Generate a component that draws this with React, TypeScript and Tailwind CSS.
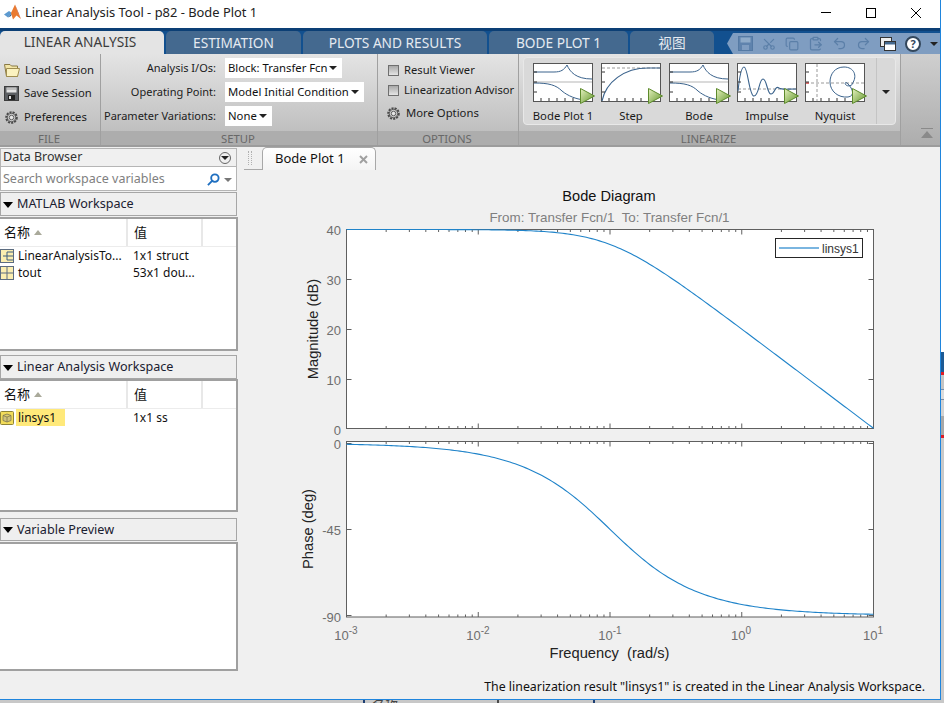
import { Copy, ClipboardPaste, Redo2, Scissors, Undo2 } from "lucide-react";

const uiFont = "font-['Noto_Sans','Noto_Sans_CJK_SC',sans-serif]";

const X0 = 346.5;
const DECADE = 131.75;
const fx = (w: number) => X0 + (Math.log10(w) + 3) * DECADE;

function curve(fn: (w: number) => number) {
  const pts: string[] = [];
  for (let i = 0; i <= 200; i++) {
    const w = Math.pow(10, -3 + (4 * i) / 200);
    pts.push(`${fx(w).toFixed(2)},${fn(w).toFixed(2)}`);
  }
  return "M" + pts.join("L");
}

// 100 / (10s + 1)
const magY = (w: number) => 428.3 - (20 * Math.log10(100 / Math.sqrt(1 + 100 * w * w))) * 4.97;
const phaseY = (w: number) => 443.2 + (Math.atan(10 * w) * 180) / Math.PI * 1.913;

function LogTicks({ y, dir }: { y: number; dir: 1 | -1 }) {
  const lines = [];
  for (let d = 0; d < 4; d++) {
    for (let m = 2; m < 10; m++) {
      const x = X0 + (d + Math.log10(m)) * DECADE;
      lines.push(<line key={`${d}-${m}`} x1={x} x2={x} y1={y} y2={y + dir * 2.5} />);
    }
    if (d > 0) {
      const x = X0 + d * DECADE;
      lines.push(<line key={`M${d}`} x1={x} x2={x} y1={y} y2={y + dir * 5} />);
    }
  }
  return <g stroke="#5f5f5f" strokeWidth="1">{lines}</g>;
}

function XLabel({ x, exp }: { x: number; exp: string }) {
  return (
    <text x={x} y={640} fontSize="13" fill="#6e6e6e" textAnchor="middle">
      10
      <tspan dy="-6" fontSize="10">{exp}</tspan>
    </text>
  );
}

function BodeChart() {
  const labels = "#6e6e6e";
  return (
    <svg
      viewBox="244 170 696 508"
      className="block w-[696px] h-[508px] font-['Liberation_Sans',sans-serif]"
    >
      <text x={609} y={201} fontSize="14.6" textAnchor="middle" fill="#111">Bode Diagram</text>
      <text x={609.5} y={222} fontSize="13.4" textAnchor="middle" fill="#7f7f7f" style={{ whiteSpace: "pre" }}>
        From: Transfer Fcn/1  To: Transfer Fcn/1
      </text>

      <rect x="346.5" y="229.5" width="527" height="199" fill="#fff" stroke="#5f5f5f" />
      <rect x="346.5" y="441.5" width="527" height="175.5" fill="#fff" stroke="#5f5f5f" />

      <LogTicks y={229.5} dir={1} />
      <LogTicks y={428.5} dir={-1} />
      <LogTicks y={441.5} dir={1} />
      <LogTicks y={617} dir={-1} />

      <g stroke="#5f5f5f">
        {[279.5, 329.5, 379.5].map((y) => (
          <g key={y}>
            <line x1="346.5" x2="351.5" y1={y} y2={y} />
            <line x1="868.5" x2="873.5" y1={y} y2={y} />
          </g>
        ))}
        <line x1="346.5" x2="351.5" y1="529.5" y2="529.5" />
        <line x1="868.5" x2="873.5" y1="529.5" y2="529.5" />
        <line x1="346.5" x2="351.5" y1="615.5" y2="615.5" />
        <line x1="868.5" x2="873.5" y1="615.5" y2="615.5" />
        <line x1="346.5" x2="351.5" y1="443.5" y2="443.5" />
        <line x1="868.5" x2="873.5" y1="443.5" y2="443.5" />
      </g>

      <path d={curve(magY)} fill="none" stroke="#1f83c9" strokeWidth="1.1" />
      <path d={curve(phaseY)} fill="none" stroke="#1f83c9" strokeWidth="1.1" />

      <g fontSize="13" fill={labels} textAnchor="end">
        <text x="341" y="235">40</text>
        <text x="341" y="285">30</text>
        <text x="341" y="335">20</text>
        <text x="341" y="385">10</text>
        <text x="341" y="435">0</text>
        <text x="341" y="449">0</text>
        <text x="341" y="535">-45</text>
        <text x="341" y="622">-90</text>
      </g>

      <XLabel x={346} exp="-3" />
      <XLabel x={478} exp="-2" />
      <XLabel x={610} exp="-1" />
      <XLabel x={741} exp="0" />
      <XLabel x={873} exp="1" />

      <text transform="translate(318 329) rotate(-90)" fontSize="14.7" fill="#222" textAnchor="middle">Magnitude (dB)</text>
      <text transform="translate(313 529) rotate(-90)" fontSize="14.7" fill="#222" textAnchor="middle">Phase (deg)</text>
      <text x={609.5} y={658} fontSize="14.7" fill="#222" textAnchor="middle" style={{ whiteSpace: "pre" }}>Frequency  (rad/s)</text>

      <rect x="775.5" y="238.5" width="87" height="19" fill="#fff" stroke="#262626" />
      <line x1="779" x2="819" y1="248" y2="248" stroke="#7ab5e0" strokeWidth="2" />
      <text x="822" y="253" fontSize="12" fill="#333">linsys1</text>
    </svg>
  );
}

function MatlabLogo() {
  return (
    <svg viewBox="0 0 17 17" className="w-[17px] h-[17px] shrink-0">
      <polygon points="0,10.5 5,7 8,9 4,13.5" fill="#5c9ad0" />
      <polygon points="4,13.5 8,9 9.5,6 7,12" fill="#2b5f96" />
      <polygon points="7,9 11,0.5 14,9 17,15 12.5,11.5 9,15.5" fill="#ea7a30" />
      <polygon points="11,0.5 14,9 17,15 13,5" fill="#b8401a" />
    </svg>
  );
}

function WindowButtons() {
  return (
    <div className="ml-auto mr-[2px] flex items-center h-full">
      <div className="w-[45px] flex justify-center"><div className="w-[10px] h-px bg-black" /></div>
      <div className="w-[45px] flex justify-center"><div className="w-[10px] h-[10px] border border-black" /></div>
      <div className="w-[45px] flex justify-center">
        <svg viewBox="0 0 10 10" className="w-[10px] h-[10px]" stroke="#000" strokeWidth="1">
          <line x1="0" y1="0" x2="10" y2="10" />
          <line x1="10" y1="0" x2="0" y2="10" />
        </svg>
      </div>
    </div>
  );
}

function RibbonTab({ label, className }: { label: string; className: string }) {
  return (
    <div className={`h-[23px] rounded-t-[5px] bg-[#44698f] text-[#e6ebf1] text-[13.7px] leading-[23px] flex items-center justify-center ${className}`}>
      {label}
    </div>
  );
}

function QuickAccess() {
  const dim = "text-[#5b7fa8]";
  return (
    <div className="ml-[13px] w-[213px] h-[21px] mt-[-1px] bg-[#7f9dc1] flex items-center pl-[11px] gap-[9px] [clip-path:polygon(6px_0,100%_0,100%_100%,6px_100%,0_50%)]">
      <svg viewBox="0 0 15 15" className="w-[15px] h-[15px] shrink-0">
        <rect x="0.5" y="0.5" width="14" height="14" fill="#5f83ad" stroke="#557aa4" />
        <rect x="2.5" y="1.5" width="10" height="5" fill="#8fabc9" />
        <rect x="4" y="9" width="7" height="5" fill="#7f9dc1" />
      </svg>
      <Scissors size={14} className={`${dim} -rotate-90`} />
      <Copy size={14} className={dim} />
      <ClipboardPaste size={15} className={dim} />
      <Undo2 size={15} className={dim} />
      <Redo2 size={15} className={dim} />
      <svg viewBox="0 0 16 14" className="w-4 h-[14px]">
        <rect x="0.5" y="0.5" width="11" height="9" fill="#eee" stroke="#333" />
        <rect x="4.5" y="4.5" width="11" height="9" fill="#fff" stroke="#333" />
        <rect x="5" y="5" width="10" height="2.5" fill="#44698f" />
      </svg>
      <div className="w-[16px] h-[16px] rounded-full bg-white border-2 border-[#33475c] text-[#33475c] text-[11px] leading-[12px] font-bold text-center">?</div>
      <Caret className="border-t-[#111]" />
    </div>
  );
}

function Caret({ className = "" }: { className?: string }) {
  return <span className={`inline-block w-0 h-0 border-x-[4px] border-x-transparent border-t-[4px] border-t-[#222] ${className}`} />;
}

function FolderIcon() {
  return (
    <svg viewBox="0 0 16 15" className="w-4 h-[15px] shrink-0">
      <path d="M0.5 1.5H6L7.5 3H13.5V13.5H2.5Z" fill="#f3e6a8" stroke="#8a7a45" />
      <path d="M2.5 5.5H15.5L13.5 13.5H2.5Z" fill="#fbf2c0" stroke="#a08e50" />
    </svg>
  );
}

function FloppyIcon() {
  return (
    <svg viewBox="0 0 15 15" className="w-[15px] h-[15px] shrink-0">
      <rect x="0.5" y="0.5" width="14" height="14" fill="#5c5f63" stroke="#3d3d3d" />
      <rect x="2.5" y="1.5" width="10" height="5" fill="#e4e4e4" />
      <line x1="3" x2="12" y1="3" y2="3" stroke="#999" />
      <rect x="4" y="9" width="7" height="5" fill="#222" />
      <rect x="5" y="10" width="2" height="3" fill="#ddd" />
    </svg>
  );
}

function GearIcon() {
  return (
    <svg viewBox="0 0 16 16" className="w-[15px] h-[15px] shrink-0" fill="none">
      <circle cx="8" cy="8" r="5.5" stroke="#4a4a4a" strokeWidth="2.4" strokeDasharray="2.2 1.1" />
      <circle cx="8" cy="8" r="4.4" fill="#cfcfcf" stroke="#555" />
      <circle cx="8" cy="8" r="2.4" fill="#e6e6e6" stroke="#555" />
    </svg>
  );
}

function SectionLabel({ children }: { children: React.ReactNode }) {
  return (
    <div className="h-[14px] pr-[2px] bg-[#adadad] text-[#686868] text-[11.3px] leading-[15px] text-center">{children}</div>
  );
}

function FileSection() {
  const items = [
    { icon: <FolderIcon />, label: "Load Session" },
    { icon: <FloppyIcon />, label: "Save Session" },
    { icon: <GearIcon />, label: "Preferences" },
  ];
  return (
    <div className="flex flex-col w-[101px] border-r border-[#a0a0a0]">
      <div className="h-[77px] flex flex-col pl-[4px] pt-[6px] gap-[3px]">
        {items.map((it) => (
          <div key={it.label} className="h-[20.5px] flex items-center gap-[5px] text-[11.3px] text-[#1c1c1c]">
            {it.icon}
            <span>{it.label}</span>
          </div>
        ))}
      </div>
      <SectionLabel>FILE</SectionLabel>
    </div>
  );
}

function Combo({ label, value, width }: { label: string; value: string; width: string }) {
  return (
    <div className="flex items-center h-[20px] gap-[9px]">
      <div className="w-[115px] text-right text-[11px] whitespace-nowrap text-[#1c1c1c] flex justify-end">{label}</div>
      <div className={`${width} h-[20px] bg-white flex items-center justify-between pl-[3px] pr-[5px] text-[11.3px] text-[#111]`}>
        <span className="whitespace-nowrap">{value}</span>
        <Caret />
      </div>
    </div>
  );
}

function SetupSection() {
  return (
    <div className="flex flex-col w-[277px] border-r border-[#a0a0a0]">
      <div className="h-[77px] flex flex-col pt-[4px] gap-[4px]">
        <Combo label="Analysis I/Os:" value="Block: Transfer Fcn" width="w-[117px]" />
        <Combo label="Operating Point:" value="Model Initial Condition" width="w-[139px]" />
        <Combo label="Parameter Variations:" value="None" width="w-[47px]" />
      </div>
      <SectionLabel>SETUP</SectionLabel>
    </div>
  );
}

function CheckRow({ label }: { label: string }) {
  return (
    <div className="flex items-center gap-[5px] h-[20px] text-[11.2px] text-[#1c1c1c] whitespace-nowrap">
      <div className="w-[11px] h-[11px] border border-[#6f6f6f] bg-linear-to-b from-[#a9a9a9] to-[#e5e5e5]" />
      {label}
    </div>
  );
}

function OptionsSection() {
  return (
    <div className="flex flex-col w-[141px] border-r border-[#a0a0a0]">
      <div className="h-[77px] flex flex-col pl-[10px] pt-[6px]">
        <CheckRow label="Result Viewer" />
        <CheckRow label="Linearization Advisor" />
        <div className="flex items-center gap-[5px] h-[20px] mt-[3px] ml-[-2px] text-[11.3px] text-[#1c1c1c]">
          <GearIcon />
          More Options
        </div>
      </div>
      <SectionLabel>OPTIONS</SectionLabel>
    </div>
  );
}

function PlayBadge() {
  return (
    <svg viewBox="0 0 15 16" className="absolute left-[46px] top-[24px] w-[15px] h-[16px]">
      <defs>
        <linearGradient id="play" x1="0" x2="1" y1="0" y2="1">
          <stop offset="0" stopColor="#e6f2c0" />
          <stop offset="1" stopColor="#5f9428" />
        </linearGradient>
      </defs>
      <polygon points="0.5,0.5 14.5,8 0.5,15.5" fill="url(#play)" stroke="#5d8a2c" />
    </svg>
  );
}

const plotStroke = "#3b638c";

function AxisTicks() {
  return (
    <g stroke="#333" strokeWidth="1">
      {[7, 15, 23, 31, 39, 47].map((x) => <line key={x} x1={x} x2={x} y1="37" y2="34" />)}
      {[8, 18, 28].map((y) => <line key={y} x1="0" x2="3" y1={y} y2={y} />)}
    </g>
  );
}

function BodeThumb() {
  return (
    <>
      <line x1="0" x2="58" y1="18" y2="18" stroke="#b5b5b5" />
      <path d="M0 8H20C27 8 30 6 33 1C36 8 42 15 58 15" fill="none" stroke={plotStroke} />
      <path d="M0 19C15 19 22 21 28 27C34 32 42 35 50 36" fill="none" stroke={plotStroke} />
    </>
  );
}

function StepThumb() {
  return (
    <>
      <line x1="0" x2="58" y1="4" y2="4" stroke="#999" strokeDasharray="3 2" />
      <path d="M0 37C4 18 22 4 46 4H58" fill="none" stroke={plotStroke} strokeWidth="1.2" />
    </>
  );
}

function ImpulseThumb() {
  return (
    <>
      <line x1="0" x2="58" y1="25" y2="25" stroke="#999" strokeDasharray="3 2" />
      <path d="M0 27C2 8 4 3 6 3C10 3 11 32 16 32C21 32 21 15 25 15C29 15 29 30 33 30C37 30 37 21 41 24C44 26 47 25 58 25" fill="none" stroke={plotStroke} strokeWidth="1.1" />
    </>
  );
}

function NyquistThumb() {
  return (
    <>
      <line x1="11" x2="11" y1="0" y2="37" stroke="#999" strokeDasharray="3 2" />
      <line x1="0" x2="58" y1="19" y2="19" stroke="#999" strokeDasharray="3 2" />
      <line x1="0" x2="3" y1="19" y2="19" stroke="#e11" />
      <path d="M46 20C52 12 48 3 38 3C29 3 24 10 24 18C24 27 32 34 42 33C49 32 47 25 42 20C40 17 38 19 40 21C42 23 47 21 46 20" fill="none" stroke={plotStroke} />
    </>
  );
}

function GalleryItem({ label, children }: { label: string; children: React.ReactNode }) {
  return (
    <div className="w-[68px] flex flex-col items-center shrink-0">
      <div className="relative w-[58px] h-[37px]">
        <svg viewBox="0 0 58 37" className="block w-[58px] h-[37px] bg-white border border-[#555] overflow-visible box-content -m-px">
          {children}
          <AxisTicks />
        </svg>
        <PlayBadge />
      </div>
      <div className="mt-[7px] text-[11.3px] leading-[16px] text-[#1a1a1a] whitespace-nowrap">{label}</div>
    </div>
  );
}

function LinearizeSection() {
  return (
    <div className="flex flex-col w-[382px] border-r border-[#a0a0a0]">
      <div className="h-[77px] pt-[3px] pl-[4px]">
        <div className="w-[373px] h-[68px] rounded-[4px] bg-[#d9d9d9] border border-[#e8e8e8] flex">
          <div className="w-[353px] flex pl-[5px] pt-[6px] border-r border-[#c4c4c4]">
            <GalleryItem label="Bode Plot 1"><BodeThumb /></GalleryItem>
            <GalleryItem label="Step"><StepThumb /></GalleryItem>
            <GalleryItem label="Bode"><BodeThumb /></GalleryItem>
            <GalleryItem label="Impulse"><ImpulseThumb /></GalleryItem>
            <GalleryItem label="Nyquist"><NyquistThumb /></GalleryItem>
          </div>
          <div className="flex-1 flex items-center justify-center pt-[1px]"><Caret /></div>
        </div>
      </div>
      <SectionLabel>LINEARIZE</SectionLabel>
    </div>
  );
}

function Toolbar() {
  return (
    <div className="h-[93px] flex flex-col shrink-0 border-b-2 border-[#9c9c9c]">
      <div className="h-[91px] flex bg-linear-to-b from-[#e4e4e4] to-[#b9b9b9]">
        <FileSection />
        <SetupSection />
        <OptionsSection />
        <LinearizeSection />
        <div className="flex-1 flex flex-col items-center justify-end pl-[12px] pb-[7px] bg-linear-to-b from-[#cfcfcf] to-[#adadad]">
          <div className="w-[12px] h-px bg-[#8a8a8a] mb-[2px]" />
          <div className="w-0 h-0 border-x-[6px] border-x-transparent border-b-[7px] border-b-[#8a8a8a]" />
        </div>
      </div>
    </div>
  );
}

function PaneHeader({ title, className = "" }: { title: string; className?: string }) {
  return (
    <div className={`mr-[1px] pt-[1px] bg-[#efefef] border border-[#a6a6a6] flex items-center gap-[4px] pl-[2px] text-[12.6px] text-[#1a2030] shrink-0 ${className}`}>
      <span className="w-0 h-0 border-x-[5px] border-x-transparent border-t-[6px] border-t-black" />
      {title}
    </div>
  );
}

function TableHead() {
  return (
    <div className="h-[28px] flex border-b border-[#ececec] text-[13px] text-[#111] shrink-0">
      <div className="w-[128px] border-r-2 border-[#e8e8e8] flex items-center gap-[4px] pl-[4px]">
        名称
        <span className="w-0 h-0 border-x-[4px] border-x-transparent border-b-[5px] border-b-[#a9a99a]" />
      </div>
      <div className="w-[75px] border-r-2 border-[#e8e8e8] flex items-center pl-[6px]">值</div>
    </div>
  );
}

function Row({ icon, name, value, highlight }: { icon: React.ReactNode; name: string; value: string; highlight?: boolean }) {
  return (
    <div className="h-[17px] flex items-center text-[12px] text-[#111] shrink-0">
      <div className="w-[133px] flex items-center">
        <div className="w-[15px] shrink-0 overflow-hidden flex justify-end">{icon}</div>
        <span className={`ml-[1px] whitespace-nowrap pl-[2px] ${highlight ? "w-[49px] h-[17px] leading-[17px] bg-[#ffe97a]" : ""}`}>{name}</span>
      </div>
      <span className="whitespace-nowrap">{value}</span>
    </div>
  );
}

function StructIcon() {
  return (
    <svg viewBox="0 0 15 14" className="w-[15px] h-[14px] shrink-0">
      <rect x="0.5" y="0.5" width="13" height="13" fill="#fbeeb0" stroke="#5c6c80" />
      <path d="M13 3H7M13 7H7M13 11H7M7 3V11M3 7H7" stroke="#3e5e80" fill="none" />
    </svg>
  );
}

function GridIcon() {
  return (
    <svg viewBox="0 0 15 14" className="w-[15px] h-[14px] shrink-0">
      <rect x="0.5" y="0.5" width="13" height="13" fill="#fbeeb0" stroke="#5c6c80" />
      <path d="M7 0V14M0 7H14" stroke="#5c6c80" />
    </svg>
  );
}

function CubeIcon() {
  return (
    <svg viewBox="0 0 15 14" className="w-[15px] h-[14px] shrink-0">
      <rect x="0.5" y="0.5" width="13" height="13" rx="1" fill="#f2dc5a" stroke="#8f8436" />
      <path d="M3 4.5L7 3L11 4.5V9.5L7 11L3 9.5ZM3 4.5L7 6L11 4.5M7 6V11" fill="#cfc27a" stroke="#7d7650" strokeWidth="0.8" />
    </svg>
  );
}

function DataBrowser() {
  return (
    <div className="w-[238px] shrink-0 flex flex-col">
      <div className="h-[19px] mt-[1px] mr-[1px] border border-[#b5b5b5] bg-[#f0f0f0] flex items-center justify-between pl-[2px] pr-[5px] text-[12.5px] text-[#333]">
        Data Browser
        <span className="w-[12px] h-[12px] rounded-full border border-[#666] flex items-center justify-center">
          <Caret className="border-x-[3px]" />
        </span>
      </div>
      <div className="h-[24px] mr-[1px] pt-[2px] border-x border-b border-[#b5b5b5] bg-white flex items-center pl-[2px] pr-[4px] text-[12.5px] text-[#808080]">
        <span className="flex-1 whitespace-nowrap">Search workspace variables</span>
        <svg viewBox="0 0 14 14" className="w-[13px] h-[13px]" fill="none" stroke="#1f6fc0" strokeWidth="2">
          <circle cx="8.5" cy="5.5" r="4" />
          <line x1="5.5" y1="8.5" x2="1" y2="13" />
        </svg>
        <Caret className="ml-[4px] border-t-[#777] border-x-[3px]" />
      </div>
      <PaneHeader title="MATLAB Workspace" className="h-[24px] mt-[1px]" />
      <div className="h-[134px] mt-[1px] bg-white border-r-2 border-y-2 border-[#a0a0a0] flex flex-col">
        <TableHead />
        <Row icon={<StructIcon />} name="LinearAnalysisTo..." value="1x1 struct" />
        <Row icon={<GridIcon />} name="tout" value="53x1 dou..." />
      </div>
      <PaneHeader title="Linear Analysis Workspace" className="h-[24px] mt-[4px]" />
      <div className="h-[133px] bg-white border-r-2 border-y-2 border-[#a0a0a0] flex flex-col">
        <TableHead />
        <Row icon={<CubeIcon />} name="linsys1" value="1x1 ss" highlight />
      </div>
      <PaneHeader title="Variable Preview" className="h-[23px] mt-[6px]" />
      <div className="h-[129px] mt-[1px] bg-white border-r-2 border-y-2 border-[#a0a0a0]" />
    </div>
  );
}

function DocTabs() {
  return (
    <div className="h-[23px] flex items-end shrink-0">
      <div className="w-[18px] h-full border-b border-[#a8a8a8] pt-[4px] pl-[4px]">
        <div className="w-[4px] h-[14px] border-x border-dotted border-[#b0b0b0]" />
      </div>
      <div className="w-[114px] h-[23px] rounded-t-[5px] border border-b-0 border-[#a8a8a8] bg-linear-to-b from-white to-[#f4f4f4] flex items-center justify-between pl-[12px] pr-[7px] text-[13px] text-[#111]">
        Bode Plot 1
        <svg viewBox="0 0 9 9" className="w-[9px] h-[9px]" stroke="#a0a0a0" strokeWidth="2">
          <line x1="1" y1="1" x2="8" y2="8" />
          <line x1="8" y1="1" x2="1" y2="8" />
        </svg>
      </div>
    </div>
  );
}

function StatusBar() {
  return (
    <div className="h-[21px] flex items-center justify-end pr-[15px] pb-[2px] text-[12.36px] text-[#111] whitespace-nowrap">
      The linearization result "linsys1" is created in the Linear Analysis Workspace.
    </div>
  );
}

// neighbouring window peeking out to the right
function Sliver() {
  return (
    <div className="w-[3px] shrink-0 flex flex-col bg-[#f4f4f4]">
      <div className="h-[352px] bg-white" />
      <div className="h-[20px] bg-[#1d5a94]" />
      <div className="h-[3px] bg-[#e01b24]" />
      <div className="h-[14px] bg-[#c4c4c4]" />
      <div className="h-px bg-[#6f8db0]" />
      <div className="h-[9px] bg-[#dcdcdc]" />
      <div className="h-px bg-[#7a8ca5]" />
      <div className="h-[16px] bg-[#d2d2d2]" />
      <div className="h-[19px] bg-[#a8a8a8]" />
      <div className="h-[3px] bg-[#e01b24]" />
      <div className="flex-1 bg-[#c9c9c9]" />
    </div>
  );
}

export default function App() {
  return (
    <div className={`w-[944px] h-[703px] overflow-hidden flex flex-col bg-[#d4d4d4] ${uiFont}`}>
      <div className="h-[700px] flex shrink-0">
        <div className="w-[941px] flex flex-col bg-[#f0f0f0] border-r border-b border-[#1f85dd]">
          <div className="h-[28px] bg-white flex items-center pl-[4px] pb-[3px] gap-[4px] shrink-0 text-[12.9px] text-[#222]">
            <MatlabLogo />
            <span>Linear Analysis Tool - p82 - Bode Plot 1</span>
            <WindowButtons />
          </div>
          <div className="h-[26px] bg-[#12508f] border-t-[3px] border-[#0c3f75] flex items-end shrink-0">
            <div className="w-[164px] h-[23px] pr-[4px] rounded-t-[5px] bg-[#e4e4e4] text-[#3c3c3c] text-[13.7px] flex items-center justify-center">LINEAR ANALYSIS</div>
            <RibbonTab label="ESTIMATION" className="w-[135px] ml-[2px]" />
            <RibbonTab label="PLOTS AND RESULTS" className="w-[184px] ml-[2px]" />
            <RibbonTab label="BODE PLOT 1" className="w-[139px] ml-[2px]" />
            <RibbonTab label="视图" className="w-[84px] ml-[2px]" />
            <QuickAccess />
          </div>
          <Toolbar />
          <div className="flex-1 flex min-h-0">
            <DataBrowser />
            <div className="flex-1 flex flex-col pl-[6px] min-w-0">
              <DocTabs />
              <div className="flex-1 min-h-0"><BodeChart /></div>
              <StatusBar />
            </div>
          </div>
        </div>
        <Sliver />
      </div>
      <div className="h-[3px] flex-1 overflow-hidden flex pl-[363px] text-[13px] leading-[13px] text-[#444] bg-[#c8c8c8]">
        <div className="w-[2px] h-full bg-[#1d3f73]" />
        <span className="ml-[7px] -mt-[1px] w-[125px]">名称</span>
        <div className="w-[2px] h-full bg-[#4a4a4a]" />
        <div className="ml-[94px] w-[2px] h-full bg-[#1d3f73]" />
      </div>
    </div>
  );
}
